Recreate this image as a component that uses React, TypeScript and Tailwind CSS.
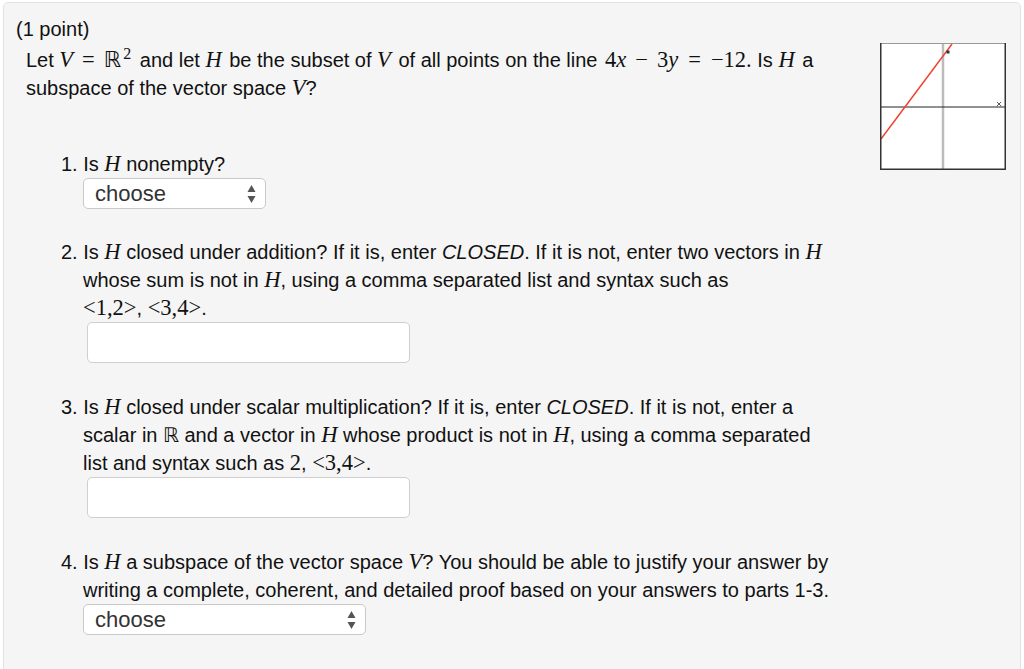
import React from "react";

const serif = '"Liberation Serif", "DejaVu Serif", serif';

const I = ({ children }: { children: React.ReactNode }) => (
  <span className="italic text-[22.5px] leading-none" style={{ fontFamily: serif }}>
    {children}
  </span>
);
const R = ({ children, className = "" }: { children: React.ReactNode; className?: string }) => (
  <span className={`text-[22.5px] leading-none ${className}`} style={{ fontFamily: serif }}>
    {children}
  </span>
);
const DS = ({ className = "" }: { className?: string }) => (
  <span className={`text-[20px] leading-none ${className}`} style={{ fontFamily: '"DejaVu Sans", serif' }}>
    ℝ
  </span>
);

const Arrows = () => (
  <svg width="9" height="20" viewBox="0 0 9 20" className="shrink-0">
    <path d="M4.5 1 L8.5 8 L0.5 8 Z" fill="#555" />
    <path d="M4.5 19 L8.5 12 L0.5 12 Z" fill="#555" />
  </svg>
);

const Select = ({ width }: { width: string }) => (
  <div className={`${width} h-[31px] bg-white border border-[#c9c9c9] rounded-[5px] flex items-center justify-between pl-[11px] pr-[9px] text-[22px] text-[#333]`}>
    <span>choose</span>
    <Arrows />
  </div>
);

const Input = () => (
  <div className="ml-[4px] w-[323px] h-[41px] bg-white border border-[#cfcfcf] rounded-[5px]" />
);

const Graph = () => (
  <svg width="126" height="127" viewBox="0 0 126 127" className="float-right mr-[14px]">
    <rect x="0" y="0" width="126" height="127" fill="white" />
    <line x1="63" y1="1" x2="63" y2="126" stroke="#bcbcbc" strokeWidth="2.5" />
    <line x1="1" y1="64" x2="125" y2="64" stroke="#222" strokeWidth="1" />
    <line x1="1" y1="96" x2="72" y2="1" stroke="#ee4433" strokeWidth="1.5" />
    <rect x="66.5" y="7.5" width="3" height="3" fill="#333" />
    <path d="M117 59 L121 63 M121 59 L117 63" stroke="#555" strokeWidth="1" />
    <line x1="0" y1="0.5" x2="126" y2="0.5" stroke="#999" strokeWidth="1" />
    <line x1="0.75" y1="0" x2="0.75" y2="127" stroke="#333" strokeWidth="1.5" />
    <line x1="125.25" y1="0" x2="125.25" y2="127" stroke="#333" strokeWidth="1.5" />
    <line x1="0" y1="126.25" x2="126" y2="126.25" stroke="#333" strokeWidth="1.5" />
  </svg>
);

const Line = ({ children, className = "" }: { children: React.ReactNode; className?: string }) => (
  <div className={`h-[28px] leading-[28px] whitespace-nowrap ${className}`}>{children}</div>
);

export default function App() {
  return (
    <div className="w-[1024px] h-[669px] bg-white overflow-hidden" style={{ fontFamily: '"Liberation Sans", Arial, sans-serif' }}>
      <div className="ml-[3px] mt-[2px] w-[1018px] h-[700px] bg-[#f5f5f5] border border-[#e2e2e2] rounded-[5px] text-[20px] text-[#111] pt-[12px]">
        <Line className="pl-[12px]">(1 point)</Line>
        <Graph />
        <div className="pl-[22px] mt-[3px]">
          <Line>
            Let <I>V</I>
            <R className="mx-[9px]">=</R>
            <DS className="text-[22px]" />
            <sup className="text-[16px] ml-[2px] mr-[3px]" style={{ fontFamily: serif }}>2</sup> and let <I>H</I>
            <span className="ml-[2px]"> be the subset of </span>
            <I>V</I>
            <span className="ml-[2px]"> of all points on the line </span>
            <R className="ml-[2px]">4</R>
            <I>x</I>
            <R className="mx-[9px]">−</R>
            <R>3</R>
            <I>y</I>
            <R className="mx-[10px]">=</R>
            <R>−12.</R> Is <I>H</I>
            <span className="ml-[2px]"> a</span>
          </Line>
          <Line>
            subspace of the vector space <I>V</I>?
          </Line>
        </div>
        <div className="pl-[57px] mt-[48px]">
          {/* 1 */}
          <Line>
            1. Is <I>H</I> nonempty?
          </Line>
          <div className="pl-[22px]">
            <Select width="w-[183px]" />
          </div>

          {/* 2 */}
          <div className="mt-[29px]">
            <Line>
              2. Is <I>H</I> closed under addition? If it is, enter <span className="italic">CLOSED</span>. If it is not, enter two vectors in <I>H</I>
            </Line>
            <div className="pl-[22px]">
              <Line>
                whose sum is not in <I>H</I>, using a comma separated list and syntax such as
              </Line>
              <Line>
                <R>&lt;1,2&gt;</R>, <R>&lt;3,4&gt;</R>.
              </Line>
              <Input />
            </div>
          </div>

          {/* 3 */}
          <div className="mt-[30px]">
            <Line>
              3. Is <I>H</I> closed under scalar multiplication? If it is, enter <span className="italic">CLOSED</span>. If it is not, enter a
            </Line>
            <div className="pl-[22px]">
              <Line>
                scalar in <DS /> and a vector in <I>H</I> whose product is not in <I>H</I>, using a comma separated
              </Line>
              <Line>
                list and syntax such as <R>2</R>, <R>&lt;3,4&gt;</R>.
              </Line>
              <Input />
            </div>
          </div>

          {/* 4 */}
          <div className="mt-[30px]">
            <Line>
              4. Is <I>H</I> a subspace of the vector space <I>V</I>? You should be able to justify your answer by
            </Line>
            <div className="pl-[22px]">
              <Line>writing a complete, coherent, and detailed proof based on your answers to parts 1-3.</Line>
              <Select width="w-[283px]" />
            </div>
          </div>
        </div>
      </div>
    </div>
  );
}
